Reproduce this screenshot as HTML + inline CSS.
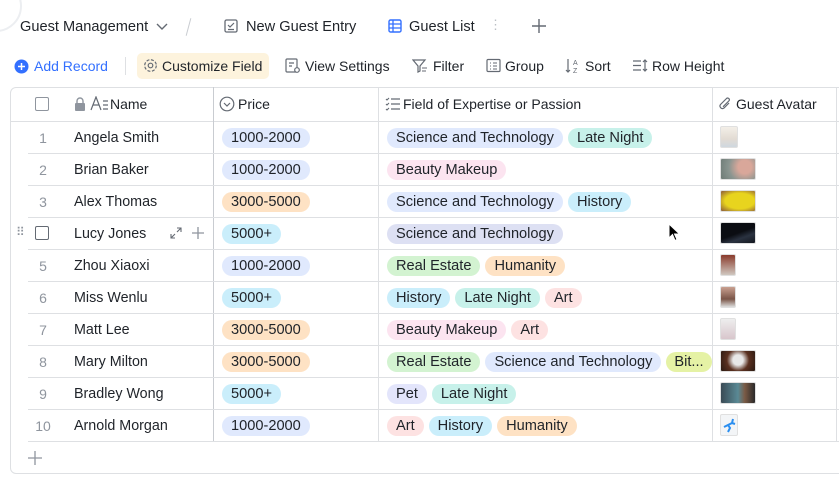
<!DOCTYPE html>
<html><head><meta charset="utf-8"><style>
*{box-sizing:border-box;margin:0;padding:0}
body{width:839px;height:484px;overflow:hidden;background:#fff;font-family:"Liberation Sans",sans-serif;color:#1f2329;position:relative;font-size:14px}
.a{position:absolute;white-space:nowrap}
.t{font-size:14px;line-height:20px}
.tag{display:inline-block;height:20px;line-height:21px;border-radius:10px;padding:0 9px;font-size:14.6px;margin-right:5px;color:#1f2329}
.bl{background:#e0e9fd}.or{background:#fee2c4}.cy{background:#caeefb}.te{background:#c7f1ea}.pk{background:#fce4f0}.rd{background:#fde2e2}.gr{background:#d3f3d1}.ye{background:#e5f2a5}.lv{background:#e3e5fb}
.hl{position:absolute;height:1px;background:#dee0e3}
.vl{position:absolute;width:1px;background:#dee0e3}
.num{position:absolute;left:28px;width:30px;text-align:center;color:#8f959e;font-size:14px;line-height:20px}
.nm{position:absolute;left:74px;font-size:14.3px;line-height:20px}
.av{position:absolute;left:720px;height:22px;border:1px solid #e0e0e0;border-radius:2px}
svg{position:absolute}
</style></head><body>
<div class="a" style="left:-30px;top:-20px;width:52px;height:52px;border-radius:50%;border:2px solid #eceef1"></div>
<div class="a t" style="left:20px;top:17px;font-size:14.6px">Guest Management</div>
<svg style="left:155px;top:21px" width="14" height="10"><path d="M2 3l5 5 5-5" fill="none" stroke="#646a73" stroke-width="1.4"/></svg>
<div class="a" style="left:188px;top:18px;width:1px;height:18px;background:#c9ccd1;transform:rotate(15deg)"></div>
<svg style="left:224px;top:19px" width="14" height="14"><rect x="1" y="1" width="12" height="12" rx="1.5" fill="none" stroke="#646a73" stroke-width="1.3"/><path d="M4 6l2 2 4-4M4 10.5h6" fill="none" stroke="#646a73" stroke-width="1.2"/></svg>
<div class="a t" style="left:246px;top:17px;font-size:14.6px">New Guest Entry</div>
<svg style="left:388px;top:19px" width="14" height="14"><rect x="1" y="1" width="12" height="12" rx="1.5" fill="none" stroke="#3370ff" stroke-width="1.4"/><path d="M1 5h12M1 9h12M5 1v12" stroke="#3370ff" stroke-width="1.3"/></svg>
<div class="a t" style="left:409px;top:17px;font-size:14.6px">Guest List</div>
<div class="a" style="left:489px;top:17px;color:#bbbfc4;font-size:13px">⋮</div>
<svg style="left:532px;top:19px" width="14" height="14"><path d="M7 0v14M0 7h14" stroke="#646a73" stroke-width="1.4"/></svg>

<svg style="left:14px;top:59px" width="15" height="15"><circle cx="7.5" cy="7.5" r="7" fill="#3370ff"/><path d="M7.5 4v7M4 7.5h7" stroke="#fff" stroke-width="1.5"/></svg>
<div class="a t" style="left:34px;top:56px;color:#3370ff">Add Record</div>
<div class="a" style="left:125px;top:57px;width:1px;height:18px;background:#dee0e3"></div>
<div class="a" style="left:137px;top:53px;width:132px;height:26px;background:#fdf3dd;border-radius:5px"></div>
<svg style="left:143px;top:58px" width="15" height="15"><circle cx="7.5" cy="7.5" r="2.3" fill="none" stroke="#646a73" stroke-width="1.2"/><circle cx="7.5" cy="7.5" r="5.8" fill="none" stroke="#646a73" stroke-width="1.2" stroke-dasharray="3 1.6"/></svg>
<div class="a t" style="left:162px;top:56px">Customize Field</div>
<svg style="left:285px;top:58px" width="16" height="16"><rect x="1" y="1" width="11" height="13" rx="1" fill="none" stroke="#646a73" stroke-width="1.2"/><path d="M4 5h5M4 8h3" stroke="#646a73" stroke-width="1.2"/><circle cx="12" cy="12" r="2.3" fill="#fff" stroke="#646a73" stroke-width="1.2"/></svg>
<div class="a t" style="left:305px;top:56px">View Settings</div>
<svg style="left:412px;top:58px" width="16" height="16"><path d="M1 2h12l-5 6v5l-2 1V8z" fill="none" stroke="#646a73" stroke-width="1.2"/><path d="M10 10h5M10 13h4" stroke="#646a73" stroke-width="1.1"/></svg>
<div class="a t" style="left:433px;top:56px">Filter</div>
<svg style="left:486px;top:58px" width="15" height="15"><rect x="1" y="1.5" width="13" height="12" rx="1" fill="none" stroke="#646a73" stroke-width="1.2"/><path d="M4 5h1M7 5h4M4 8h1M7 8h4M4 11h1M7 11h4" stroke="#646a73" stroke-width="1.1"/></svg>
<div class="a t" style="left:505px;top:56px">Group</div>
<svg style="left:565px;top:58px" width="16" height="16"><path d="M3 1v13M1 12l2 2 2-2" fill="none" stroke="#646a73" stroke-width="1.2"/><text x="8" y="7" font-size="7" fill="#646a73" font-family="Liberation Sans">A</text><text x="8" y="15" font-size="7" fill="#646a73" font-family="Liberation Sans">Z</text></svg>
<div class="a t" style="left:585px;top:56px">Sort</div>
<svg style="left:632px;top:58px" width="16" height="15"><path d="M1 3h8M1 7.5h8M1 12h8M13 2v11M11 4l2-2 2 2M11 11l2 2 2-2" fill="none" stroke="#646a73" stroke-width="1.2"/></svg>
<div class="a t" style="left:652px;top:56px">Row Height</div>

<div class="a" style="left:10px;top:87px;width:840px;height:387px;border:1px solid #dee0e3;border-radius:6px"></div>
<div class="hl" style="left:10px;top:121px;width:829px"></div>
<div class="vl" style="left:213px;top:87px;height:355px;background:#c9ccd1"></div>
<div class="vl" style="left:378px;top:87px;height:355px"></div>
<div class="vl" style="left:712px;top:87px;height:355px"></div>
<div class="vl" style="left:836px;top:87px;height:355px"></div>

<div class="a" style="left:35px;top:97px;width:14px;height:14px;border:1.3px solid #8f959e;border-radius:2px"></div>
<svg style="left:74px;top:97px" width="12" height="14"><rect x="1" y="6" width="10" height="8" rx="1" fill="#8f959e"/><path d="M3 6V4a3 3 0 0 1 6 0v2" fill="none" stroke="#8f959e" stroke-width="1.4"/></svg>
<svg style="left:90px;top:96px" width="20" height="15"><path d="M1 14L6 1l5 13M3 9h6" fill="none" stroke="#646a73" stroke-width="1.2"/><path d="M13 5h5M13 9h5M13 13h5" stroke="#646a73" stroke-width="1.2"/></svg>
<div class="a t" style="left:110px;top:94px">Name</div>
<svg style="left:219px;top:96px" width="16" height="16"><circle cx="8" cy="8" r="6.8" fill="none" stroke="#646a73" stroke-width="1.2"/><path d="M5 7l3 3 3-3" fill="none" stroke="#646a73" stroke-width="1.2"/></svg>
<div class="a t" style="left:238px;top:94px">Price</div>
<svg style="left:385px;top:97px" width="16" height="14"><path d="M1 2l1 1 2-2M1 7l1 1 2-2M1 12l1 1 2-2" fill="none" stroke="#646a73" stroke-width="1.1"/><path d="M6 2h9M6 7h9M6 12h9" stroke="#646a73" stroke-width="1.2"/></svg>
<div class="a t" style="left:403px;top:94px">Field of Expertise or Passion</div>
<svg style="left:718px;top:97px" width="14" height="14"><path d="M11 6L6 11a2.5 2.5 0 0 1-3.5-3.5l6-6a1.7 1.7 0 0 1 2.4 2.4L5 9.8" fill="none" stroke="#646a73" stroke-width="1.2"/></svg>
<div class="a t" style="left:736px;top:94px">Guest Avatar</div>

<div class="hl" style="left:28px;top:153px;width:811px"></div>
<div class="hl" style="left:28px;top:185px;width:811px"></div>
<div class="hl" style="left:28px;top:217px;width:811px"></div>
<div class="hl" style="left:28px;top:249px;width:811px"></div>
<div class="hl" style="left:28px;top:281px;width:811px"></div>
<div class="hl" style="left:28px;top:313px;width:811px"></div>
<div class="hl" style="left:28px;top:345px;width:811px"></div>
<div class="hl" style="left:28px;top:377px;width:811px"></div>
<div class="hl" style="left:28px;top:409px;width:811px"></div>
<div class="hl" style="left:28px;top:441px;width:811px"></div>

<div class="num" style="top:128px">1</div><div class="nm" style="top:128px">Angela Smith</div>
<div class="a" style="left:222px;top:128px"><span class="tag bl">1000-2000</span></div>
<div class="a" style="left:387px;top:128px"><span class="tag bl">Science and Technology</span><span class="tag te">Late Night</span></div>
<div class="av" style="top:126px;width:18px;background:linear-gradient(#f3efe8,#e2dbd3 60%,#cfd8df)"></div>

<div class="num" style="top:160px">2</div><div class="nm" style="top:160px">Brian Baker</div>
<div class="a" style="left:222px;top:160px"><span class="tag bl">1000-2000</span></div>
<div class="a" style="left:387px;top:160px"><span class="tag pk">Beauty Makeup</span></div>
<div class="av" style="top:158px;width:36px;background:radial-gradient(circle at 70% 40%,#d9a79a 25%,#8a9590 60%,#6d7a75)"></div>

<div class="num" style="top:192px">3</div><div class="nm" style="top:192px">Alex Thomas</div>
<div class="a" style="left:222px;top:192px"><span class="tag or">3000-5000</span></div>
<div class="a" style="left:387px;top:192px"><span class="tag bl">Science and Technology</span><span class="tag cy">History</span></div>
<div class="av" style="top:190px;width:36px;background:radial-gradient(ellipse at 55% 50%,#e8d41e 55%,#8a5a3a)"></div>

<div class="a" style="left:16px;top:225px;color:#8f959e;font-size:12px;letter-spacing:-1px">⠿</div>
<div class="a" style="left:35px;top:226px;width:14px;height:14px;border:1.3px solid #646a73;border-radius:2px"></div>
<div class="nm" style="top:224px">Lucy Jones</div>
<svg style="left:170px;top:227px" width="12" height="12"><path d="M1 11l4-4M11 1L7 5M1 7v4h4M7 1h4v4" fill="none" stroke="#646a73" stroke-width="1.1"/></svg>
<svg style="left:192px;top:227px" width="12" height="12"><path d="M6 0v12M0 6h12" stroke="#8f959e" stroke-width="1.3"/></svg>
<div class="a" style="left:222px;top:224px"><span class="tag cy">5000+</span></div>
<div class="a" style="left:387px;top:224px"><span class="tag lv" style="background:#dde0f3">Science and Technology</span></div>
<div class="av" style="top:222px;width:36px;background:linear-gradient(160deg,#0b0d12 50%,#2a3240 70%,#141820)"></div>
<svg style="left:668px;top:223px" width="12" height="19"><path d="M1 1v14l3.5-3.5 2.5 6 2-1-2.5-5.5h5z" fill="#000" stroke="#fff" stroke-width="1"/></svg>

<div class="num" style="top:256px">5</div><div class="nm" style="top:256px">Zhou Xiaoxi</div>
<div class="a" style="left:222px;top:256px"><span class="tag bl">1000-2000</span></div>
<div class="a" style="left:387px;top:256px"><span class="tag gr">Real Estate</span><span class="tag or">Humanity</span></div>
<div class="av" style="top:254px;width:16px;background:linear-gradient(#8a3b2c,#d0c8c0)"></div>

<div class="num" style="top:288px">6</div><div class="nm" style="top:288px">Miss Wenlu</div>
<div class="a" style="left:222px;top:288px"><span class="tag cy">5000+</span></div>
<div class="a" style="left:387px;top:288px"><span class="tag cy">History</span><span class="tag te">Late Night</span><span class="tag rd">Art</span></div>
<div class="av" style="top:286px;width:16px;background:linear-gradient(#c9a090,#7a5548 60%,#ddd)"></div>

<div class="num" style="top:320px">7</div><div class="nm" style="top:320px">Matt Lee</div>
<div class="a" style="left:222px;top:320px"><span class="tag or">3000-5000</span></div>
<div class="a" style="left:387px;top:320px"><span class="tag pk">Beauty Makeup</span><span class="tag rd">Art</span></div>
<div class="av" style="top:318px;width:16px;background:linear-gradient(#eee,#d8c6cc)"></div>

<div class="num" style="top:352px">8</div><div class="nm" style="top:352px">Mary Milton</div>
<div class="a" style="left:222px;top:352px"><span class="tag or">3000-5000</span></div>
<div class="a" style="left:387px;top:352px"><span class="tag gr">Real Estate</span><span class="tag bl">Science and Technology</span><span class="tag ye" style="padding:0 8px">Bit...</span></div>
<div class="av" style="top:350px;width:36px;background:radial-gradient(circle at 50% 45%,#e8e8e8 25%,#5a3020 55%,#2a1a12)"></div>

<div class="num" style="top:384px">9</div><div class="nm" style="top:384px">Bradley Wong</div>
<div class="a" style="left:222px;top:384px"><span class="tag cy">5000+</span></div>
<div class="a" style="left:387px;top:384px"><span class="tag lv">Pet</span><span class="tag te">Late Night</span></div>
<div class="av" style="top:382px;width:36px;background:linear-gradient(90deg,#3a4a55,#5a8a95 50%,#7a5a45 70%,#2a2a2a)"></div>

<div class="num" style="top:416px">10</div><div class="nm" style="top:416px">Arnold Morgan</div>
<div class="a" style="left:222px;top:416px"><span class="tag bl">1000-2000</span></div>
<div class="a" style="left:387px;top:416px"><span class="tag rd">Art</span><span class="tag cy">History</span><span class="tag or">Humanity</span></div>
<div class="av" style="top:414px;width:18px;background:#f3f5f7"></div>
<svg style="left:722px;top:418px" width="14" height="16"><path d="M11 1l-1 4-4 2-4 2M6 7l2 3-2 4M10 5l3 1" fill="none" stroke="#2a8ef0" stroke-width="2"/></svg>

<svg style="left:28px;top:451px" width="14" height="14"><path d="M7 0v14M0 7h14" stroke="#8f959e" stroke-width="1.3"/></svg>
</body></html>
